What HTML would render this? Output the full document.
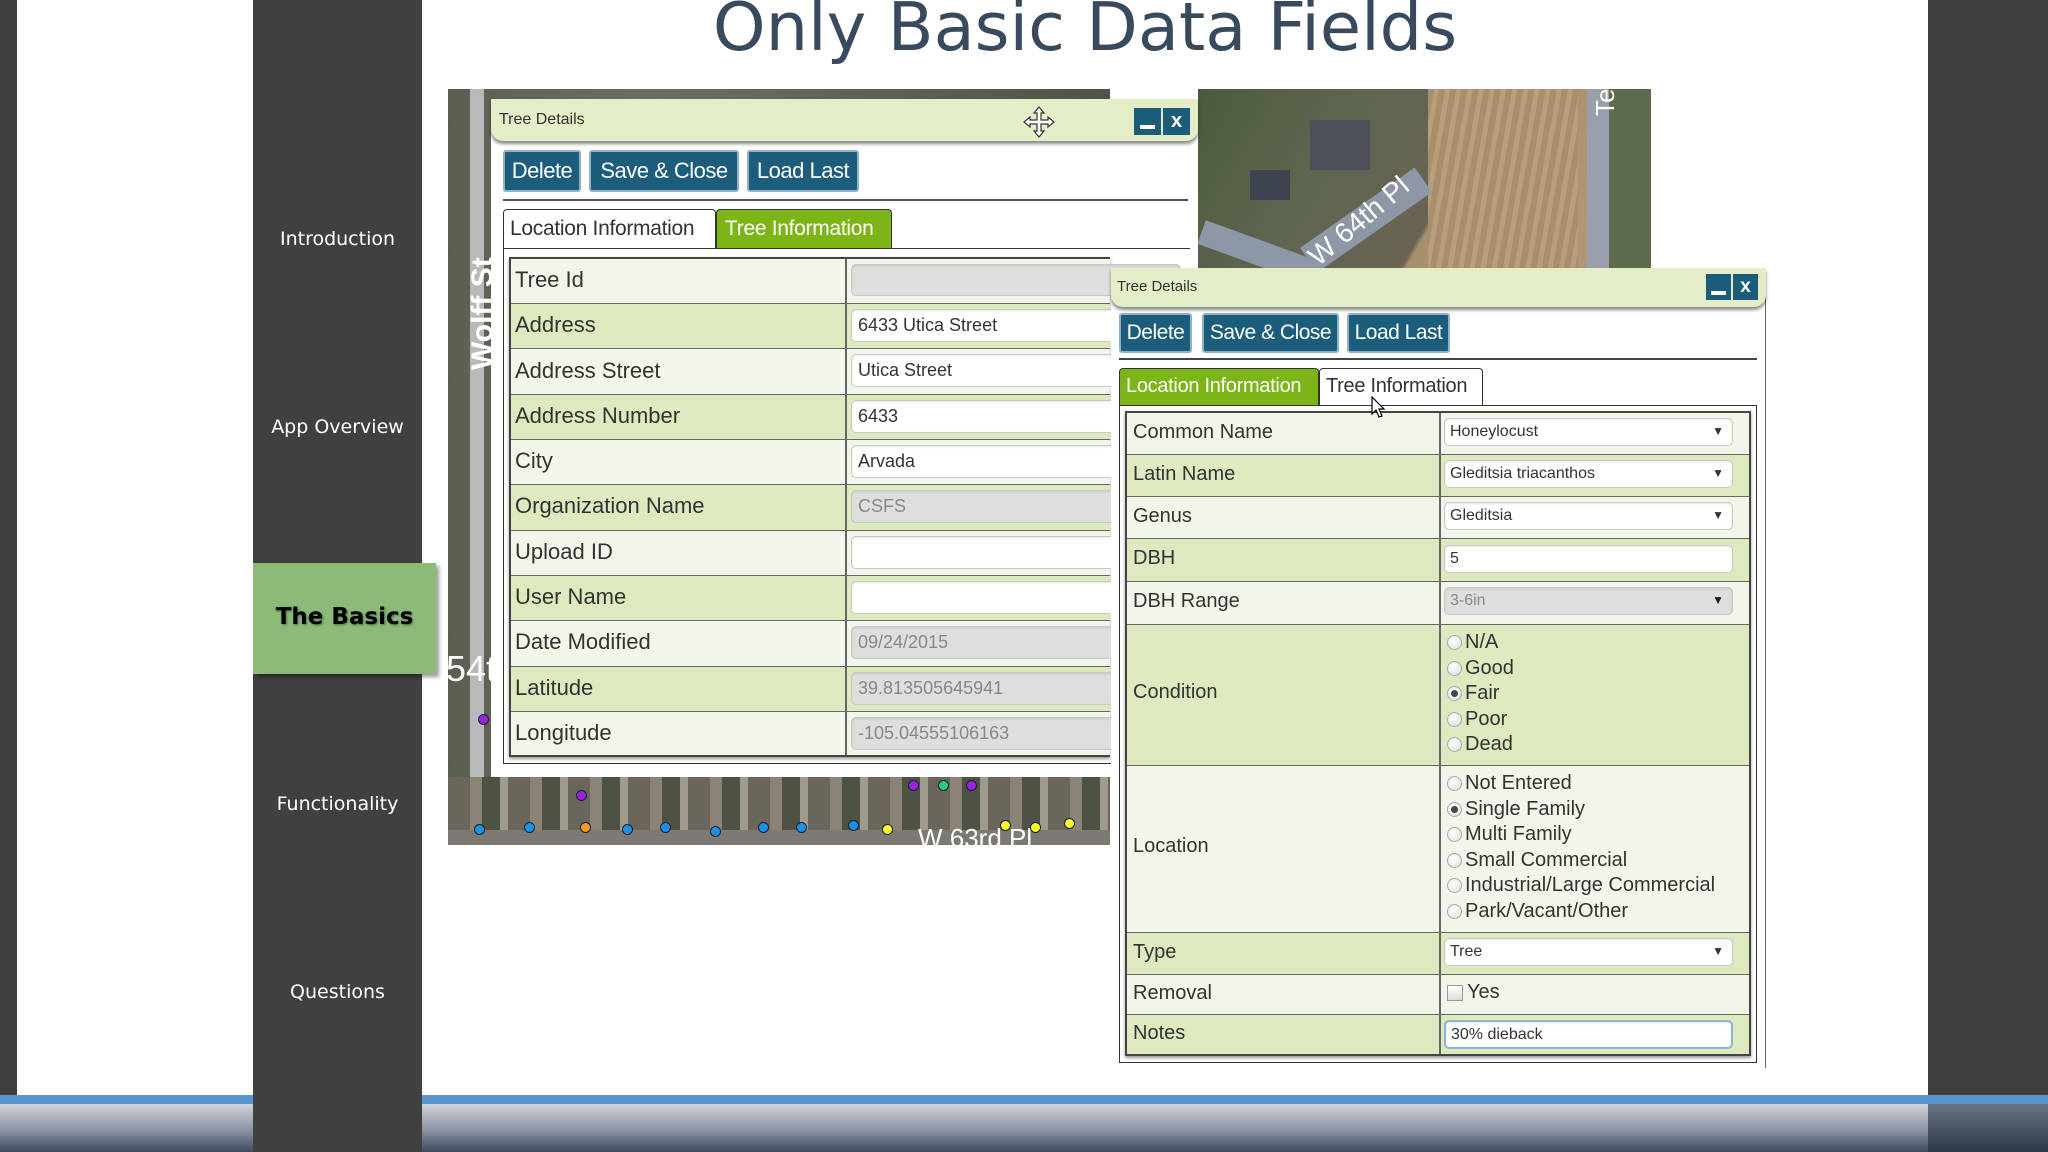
<!DOCTYPE html>
<html><head><meta charset="utf-8">
<style>
*{margin:0;padding:0;box-sizing:border-box}
body{width:2048px;height:1152px;position:relative;overflow:hidden;background:#fff;font-family:"Liberation Sans",Arial,sans-serif}
.a{position:absolute}
.nav{position:absolute;left:253px;width:169px;text-align:center;color:#fff;font-family:"DejaVu Sans","Liberation Sans",sans-serif;font-size:19px}
.title{position:absolute;left:422px;width:1326px;top:-12px;text-align:center;font-size:67px;color:#3a4a5e;font-family:"DejaVu Sans","Liberation Sans",sans-serif}
.dlg{position:absolute;background:#fff}
.tb{position:absolute;background:#e3edc6;border-radius:0 0 12px 12px;box-shadow:0 3px 3px rgba(0,0,0,.45);font-size:16px;color:#333}
.btn{position:absolute;background:#1c5d7c;color:#fff;border:2px solid #8fb3c4;border-radius:3px;text-align:center;font-size:22px;letter-spacing:-0.5px}
.wb{position:absolute;background:#1c5d7c;color:#fff;font-weight:bold;text-align:center}
.tab{position:absolute;font-size:21px;letter-spacing:-0.3px;border:1px solid #333;border-bottom:none;border-radius:4px 4px 0 0}
.row{position:absolute;border-bottom:1.5px solid #666}
.lab{position:absolute;color:#333}
.in{position:absolute;background:#fff;border:1px solid #c8c8c8;border-radius:5px;color:#333;box-shadow:inset 0 1px 2px rgba(0,0,0,.1)}
.ro{background:#dedede;color:#888}
.L{background:#f2f5ea}.G{background:#dde9be}
.rad{position:absolute;width:15px;height:15px;border-radius:50%;border:1px solid #aaa;background:radial-gradient(circle at 40% 35%,#fff,#ddd)}
.sel::after{content:"";position:absolute;left:3px;top:3px;width:7px;height:7px;border-radius:50%;background:#444}
.dot{position:absolute;width:11px;height:11px;border-radius:50%;border:1px solid #123}
</style></head><body>

<!-- frame -->
<div class="a" style="left:0;top:0;width:17px;height:1152px;background:#3f3f3f"></div>
<div class="a" style="left:1928px;top:0;width:120px;height:1152px;background:#3f3f3f"></div>
<div class="a" style="left:0;top:1095px;width:2048px;height:9px;background:#5b95cf"></div>
<div class="a" style="left:0;top:1104px;width:2048px;height:48px;background:linear-gradient(#d0d3da,#8a93a4 55%,#3e495c)"></div>
<div class="a" style="left:1928px;top:1104px;width:120px;height:48px;background:linear-gradient(#6a7384,#2f3847)"></div>
<div class="a" style="left:253px;top:0;width:169px;height:1152px;background:#404040"></div>

<div class="title">Only Basic Data Fields</div>

<div class="nav" style="top:228px">Introduction</div>
<div class="nav" style="top:416px">App Overview</div>
<div class="a" style="left:253px;top:563px;width:183px;height:111px;background:#8bba79;box-shadow:3px 3px 4px rgba(0,0,0,.4)"></div>
<div class="nav" style="top:604px;width:183px;color:#000;font-weight:bold;font-size:23px;text-shadow:1px 1px 2px rgba(0,0,0,.4)">The Basics</div>
<div class="nav" style="top:793px">Functionality</div>
<div class="nav" style="top:981px">Questions</div>

<!-- map left -->
<div class="a" style="left:448px;top:89px;width:662px;height:756px;background:linear-gradient(90deg,#5b5f52,#6e6d62 30%,#4f5448)"></div>
<div class="a" style="left:470px;top:89px;width:14px;height:700px;background:#b7b9bb"></div>
<div class="a" style="left:448px;top:777px;width:662px;height:68px;background:repeating-linear-gradient(90deg,#6b665c 0 22px,#8a8376 22px 34px,#4e5244 34px 52px,#a09a8c 52px 60px)"></div>
<div class="a" style="left:448px;top:830px;width:662px;height:15px;background:#7d7a73"></div>
<div class="a" style="left:466px;color:#fff;font-size:30px;font-weight:bold;transform:rotate(-90deg);transform-origin:0 0;top:370px">Wolff St</div>
<div class="a" style="left:446px;top:648px;color:#fff;font-size:36px">54t</div>
<div class="a" style="left:918px;top:823px;color:#fff;font-size:26px">W 63rd Pl</div>
<div class="dot" style="left:474px;top:824px;background:#1e90e0"></div>
<div class="dot" style="left:524px;top:822px;background:#1e90e0"></div>
<div class="dot" style="left:580px;top:822px;background:#f29a1e"></div>
<div class="dot" style="left:622px;top:824px;background:#1e90e0"></div>
<div class="dot" style="left:660px;top:822px;background:#1e90e0"></div>
<div class="dot" style="left:710px;top:826px;background:#1e90e0"></div>
<div class="dot" style="left:758px;top:822px;background:#1e90e0"></div>
<div class="dot" style="left:796px;top:822px;background:#1e90e0"></div>
<div class="dot" style="left:848px;top:820px;background:#1e90e0"></div>
<div class="dot" style="left:882px;top:824px;background:#ffff22"></div>
<div class="dot" style="left:1000px;top:820px;background:#ffff22"></div>
<div class="dot" style="left:1030px;top:822px;background:#ffff22"></div>
<div class="dot" style="left:1064px;top:818px;background:#ffff22"></div>
<div class="dot" style="left:576px;top:790px;background:#a020e0"></div>
<div class="dot" style="left:908px;top:780px;background:#a020e0"></div>
<div class="dot" style="left:938px;top:780px;background:#20d080"></div>
<div class="dot" style="left:966px;top:780px;background:#a020e0"></div>
<div class="dot" style="left:478px;top:714px;background:#a020e0"></div>

<!-- map top right -->
<div class="a" style="left:1198px;top:89px;width:453px;height:179px;background:linear-gradient(120deg,#4c5a3c,#5e6650 30%,#6a6354 55%,#a88f6e 56%,#b09676 85%)"></div>
<div class="a" style="left:1428px;top:89px;width:150px;height:179px;background:repeating-linear-gradient(100deg,#a98e6d 0 6px,#b89e7d 6px 11px)"></div>
<div class="a" style="left:1587px;top:89px;width:22px;height:179px;background:#9aa0ab"></div>
<div class="a" style="left:1609px;top:89px;width:42px;height:179px;background:#5d6a4c"></div>
<div class="a" style="left:1250px;top:170px;width:40px;height:30px;background:#3d4450"></div>
<div class="a" style="left:1310px;top:120px;width:60px;height:50px;background:#4d5058"></div>
<div class="a" style="left:1296px;top:205px;width:140px;height:30px;background:#8d97a6;transform:rotate(-35deg)"></div>
<div class="a" style="left:1198px;top:240px;width:120px;height:25px;background:#8d97a6;transform:rotate(20deg)"></div>
<div class="a" style="left:1302px;top:248px;color:#fff;font-size:28px;transform:rotate(-40deg);transform-origin:0 0">W 64th Pl</div>
<div class="a" style="left:1590px;top:116px;color:#fff;font-size:26px;transform:rotate(-90deg);transform-origin:0 0">Te</div>

<!-- dialog 1 -->
<div class="dlg" style="left:491px;top:99px;width:707px;height:678px"></div>
<div class="tb" style="left:491px;top:99px;width:707px;height:42px;padding:12px 8px">Tree Details</div>
<svg class="a" style="left:1022px;top:105px" width="34" height="34" viewBox="0 0 34 34"><path d="M17 2 L12 8 H15 V15 H8 V12 L2 17 L8 22 V19 H15 V26 H12 L17 32 L22 26 H19 V19 H26 V22 L32 17 L26 12 V15 H19 V8 H22 Z" fill="#fff" stroke="#333" stroke-width="1.2"/></svg>
<div class="wb" style="left:1134px;top:108px;width:27px;height:27px"><div class="a" style="left:6px;top:17px;width:15px;height:4px;background:#fff"></div></div>
<div class="wb" style="left:1163px;top:108px;width:27px;height:27px;font-size:20px;line-height:27px">x</div>
<div class="btn" style="left:503px;top:150px;width:78px;height:42px;line-height:38px">Delete</div>
<div class="btn" style="left:589px;top:150px;width:150px;height:42px;line-height:38px">Save &amp; Close</div>
<div class="btn" style="left:747px;top:150px;width:112px;height:42px;line-height:38px">Load Last</div>
<div class="a" style="left:503px;top:199px;width:685px;height:2px;background:#555"></div>
<div class="tab" style="left:503px;top:209px;width:213px;height:40px;background:#fff;color:#333;padding:7px 6px">Location Information</div>
<div class="tab" style="left:716px;top:209px;width:176px;height:40px;background:#7db518;color:#fff;padding:7px 8px">Tree Information</div>
<div class="a" style="left:503px;top:248px;width:687px;height:516px;border:1.5px solid #333;border-right:none"></div>
<div class="a" style="left:509px;top:257px;width:601px;height:500px;border:2px solid #444;border-right:none;box-shadow:0 2px 3px rgba(0,0,0,.4);overflow:hidden">
<div style="position:relative">
 <div class="row L" style="left:0;top:0;width:700px;height:45px"></div>
 <div class="row G" style="left:0;top:45px;width:700px;height:45px"></div>
 <div class="row L" style="left:0;top:90px;width:700px;height:46px"></div>
 <div class="row G" style="left:0;top:136px;width:700px;height:45px"></div>
 <div class="row L" style="left:0;top:181px;width:700px;height:45px"></div>
 <div class="row G" style="left:0;top:226px;width:700px;height:46px"></div>
 <div class="row L" style="left:0;top:272px;width:700px;height:45px"></div>
 <div class="row G" style="left:0;top:317px;width:700px;height:45px"></div>
 <div class="row L" style="left:0;top:362px;width:700px;height:46px"></div>
 <div class="row G" style="left:0;top:408px;width:700px;height:45px"></div>
 <div class="row L" style="left:0;top:453px;width:700px;height:47px;border:none"></div>
 <div class="a" style="left:334px;top:0;width:1.5px;height:500px;background:#666"></div>
</div></div>
<div style="position:absolute;left:515px;top:257px;font-size:22px;color:#333;line-height:45.3px">Tree Id<br>Address<br>Address Street<br>Address Number<br>City<br>Organization Name<br>Upload ID<br>User Name<br>Date Modified<br>Latitude<br>Longitude</div>
<div class="in ro" style="left:851px;top:264px;width:330px;height:32px"></div>
<div class="in" style="left:851px;top:309px;width:330px;height:33px;font-size:18px;padding:5px 6px">6433 Utica Street</div>
<div class="in" style="left:851px;top:354px;width:330px;height:33px;font-size:18px;padding:5px 6px">Utica Street</div>
<div class="in" style="left:851px;top:400px;width:330px;height:33px;font-size:18px;padding:5px 6px">6433</div>
<div class="in" style="left:851px;top:445px;width:330px;height:33px;font-size:18px;padding:5px 6px">Arvada</div>
<div class="in ro" style="left:851px;top:490px;width:330px;height:33px;font-size:18px;padding:5px 6px">CSFS</div>
<div class="in" style="left:851px;top:536px;width:330px;height:33px"></div>
<div class="in" style="left:851px;top:581px;width:330px;height:33px"></div>
<div class="in ro" style="left:851px;top:626px;width:330px;height:33px;font-size:18px;padding:5px 6px">09/24/2015</div>
<div class="in ro" style="left:851px;top:672px;width:330px;height:33px;font-size:18px;padding:5px 6px">39.813505645941</div>
<div class="in ro" style="left:851px;top:717px;width:330px;height:33px;font-size:18px;padding:5px 6px">-105.04555106163</div>

<!-- dialog 2 -->
<div class="dlg" style="left:1111px;top:268px;width:655px;height:800px;border-right:1.5px solid #666"></div>
<div class="tb" style="left:1111px;top:268px;width:655px;height:39px;padding:10px 6px;font-size:15px">Tree Details</div>
<div class="wb" style="left:1706px;top:274px;width:25px;height:26px"><div class="a" style="left:5px;top:17px;width:15px;height:4px;background:#fff"></div></div>
<div class="wb" style="left:1733px;top:274px;width:25px;height:26px;font-size:19px;line-height:26px">x</div>
<div class="btn" style="left:1119px;top:313px;width:73px;height:40px;line-height:36px;font-size:21px">Delete</div>
<div class="btn" style="left:1202px;top:313px;width:137px;height:40px;line-height:36px;font-size:21px">Save &amp; Close</div>
<div class="btn" style="left:1347px;top:313px;width:103px;height:40px;line-height:36px;font-size:21px">Load Last</div>
<div class="a" style="left:1119px;top:358px;width:638px;height:2px;background:#444"></div>
<div class="tab" style="left:1119px;top:368px;width:200px;height:38px;background:#7db518;color:#fff;padding:6px 6px;font-size:20px">Location Information</div>
<div class="tab" style="left:1319px;top:368px;width:164px;height:38px;background:#fff;color:#333;padding:6px 6px;font-size:20px">Tree Information</div>
<div class="a" style="left:1119px;top:405px;width:638px;height:658px;border:1.5px solid #333"></div>
<div class="a" style="left:1125px;top:411px;width:626px;height:645px;border:2px solid #444;box-shadow:0 2px 3px rgba(0,0,0,.4);overflow:hidden">
<div style="position:relative">
 <div class="row L" style="left:0;top:0;width:626px;height:42px"></div>
 <div class="row G" style="left:0;top:42px;width:626px;height:42px"></div>
 <div class="row L" style="left:0;top:84px;width:626px;height:42px"></div>
 <div class="row G" style="left:0;top:126px;width:626px;height:43px"></div>
 <div class="row L" style="left:0;top:169px;width:626px;height:43px"></div>
 <div class="row G" style="left:0;top:212px;width:626px;height:141px"></div>
 <div class="row L" style="left:0;top:353px;width:626px;height:167px"></div>
 <div class="row G" style="left:0;top:520px;width:626px;height:42px"></div>
 <div class="row L" style="left:0;top:562px;width:626px;height:40px"></div>
 <div class="row G" style="left:0;top:602px;width:626px;height:45px;border:none"></div>
 <div class="a" style="left:312px;top:0;width:1.5px;height:650px;background:#666"></div>
</div></div>
<div class="lab" style="left:1133px;top:421px;font-size:20px">Common Name</div>
<div class="lab" style="left:1133px;top:463px;font-size:20px">Latin Name</div>
<div class="lab" style="left:1133px;top:505px;font-size:20px">Genus</div>
<div class="lab" style="left:1133px;top:547px;font-size:20px">DBH</div>
<div class="lab" style="left:1133px;top:590px;font-size:20px">DBH Range</div>
<div class="lab" style="left:1133px;top:681px;font-size:20px">Condition</div>
<div class="lab" style="left:1133px;top:835px;font-size:20px">Location</div>
<div class="lab" style="left:1133px;top:941px;font-size:20px">Type</div>
<div class="lab" style="left:1133px;top:982px;font-size:20px">Removal</div>
<div class="lab" style="left:1133px;top:1022px;font-size:20px">Notes</div>

<div class="in" style="left:1444px;top:418px;width:289px;height:28px;font-size:16px;padding:4px 5px">Honeylocust<span class="a" style="right:8px;top:5px;font-size:12px">▼</span></div>
<div class="in" style="left:1444px;top:460px;width:289px;height:28px;font-size:16px;padding:4px 5px">Gleditsia triacanthos<span class="a" style="right:8px;top:5px;font-size:12px">▼</span></div>
<div class="in" style="left:1444px;top:502px;width:289px;height:28px;font-size:16px;padding:4px 5px">Gleditsia<span class="a" style="right:8px;top:5px;font-size:12px">▼</span></div>
<div class="in" style="left:1444px;top:545px;width:289px;height:28px;font-size:16px;padding:4px 5px">5</div>
<div class="in ro" style="left:1444px;top:587px;width:289px;height:28px;font-size:16px;padding:4px 5px">3-6in<span class="a" style="right:8px;top:5px;font-size:12px;color:#222">▼</span></div>

<div class="a" style="left:1447px;top:630px;font-size:20px;color:#333;line-height:25.6px">
<div style="position:relative;padding-left:18px"><span class="rad" style="left:0;top:5px"></span>N/A</div>
<div style="position:relative;padding-left:18px"><span class="rad" style="left:0;top:5px"></span>Good</div>
<div style="position:relative;padding-left:18px"><span class="rad sel" style="left:0;top:5px"></span>Fair</div>
<div style="position:relative;padding-left:18px"><span class="rad" style="left:0;top:5px"></span>Poor</div>
<div style="position:relative;padding-left:18px"><span class="rad" style="left:0;top:5px"></span>Dead</div>
</div>
<div class="a" style="left:1447px;top:771px;font-size:20px;color:#333;line-height:25.6px">
<div style="position:relative;padding-left:18px"><span class="rad" style="left:0;top:5px"></span>Not Entered</div>
<div style="position:relative;padding-left:18px"><span class="rad sel" style="left:0;top:5px"></span>Single Family</div>
<div style="position:relative;padding-left:18px"><span class="rad" style="left:0;top:5px"></span>Multi Family</div>
<div style="position:relative;padding-left:18px"><span class="rad" style="left:0;top:5px"></span>Small Commercial</div>
<div style="position:relative;padding-left:18px"><span class="rad" style="left:0;top:5px"></span>Industrial/Large Commercial</div>
<div style="position:relative;padding-left:18px"><span class="rad" style="left:0;top:5px"></span>Park/Vacant/Other</div>
</div>
<div class="in" style="left:1444px;top:938px;width:289px;height:28px;font-size:16px;padding:4px 5px">Tree<span class="a" style="right:8px;top:5px;font-size:12px">▼</span></div>
<div class="a" style="left:1447px;top:985px;width:16px;height:16px;border:1px solid #999;background:linear-gradient(#fff,#ddd)"></div>
<div class="a" style="left:1467px;top:981px;font-size:20px;color:#333">Yes</div>
<div class="in" style="left:1444px;top:1020px;width:289px;height:29px;font-size:16px;padding:4px 5px;border:2px solid #8ab4d8">30% dieback</div>

<svg class="a" style="left:1371px;top:396px" width="16" height="24" viewBox="0 0 16 24"><path d="M1 1 V18 L5 14 L8 21 L11 20 L8 13 H13 Z" fill="#fff" stroke="#000" stroke-width="1.2"/></svg>
</body></html>
